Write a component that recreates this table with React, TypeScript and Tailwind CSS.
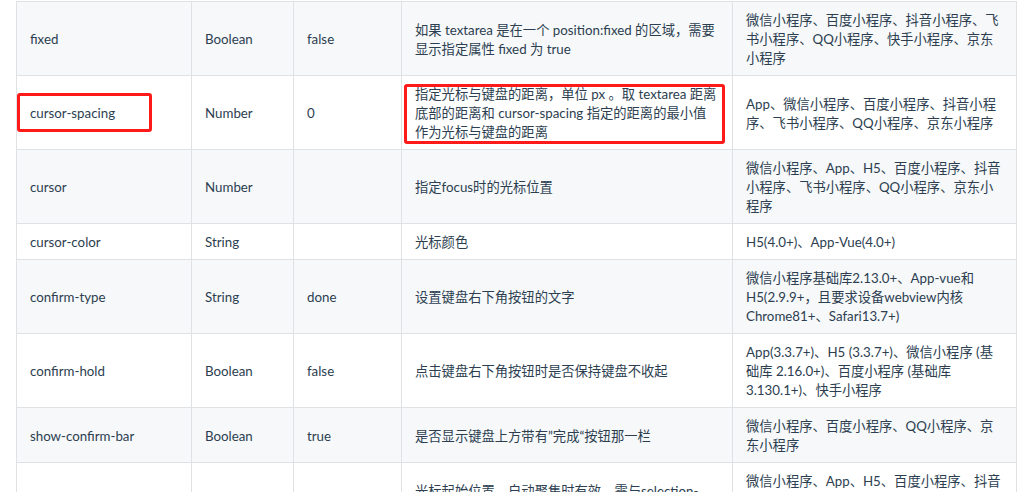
import React from 'react';

type Row = {
  name: string;
  type: string;
  def: string;
  desc: string;
  platform: string;
  markName?: boolean;
  markDesc?: boolean;
};

const rows: Row[] = [
  {
    name: 'fixed',
    type: 'Boolean',
    def: 'false',
    desc: '如果 textarea 是在一个 position:fixed 的区域，需要显示指定属性 fixed 为 true',
    platform: '微信小程序、百度小程序、抖音小程序、飞书小程序、QQ小程序、快手小程序、京东小程序',
  },
  {
    name: 'cursor-spacing',
    type: 'Number',
    def: '0',
    desc: '指定光标与键盘的距离，单位 px 。取 textarea 距离底部的距离和 cursor-spacing 指定的距离的最小值作为光标与键盘的距离',
    platform: 'App、微信小程序、百度小程序、抖音小程序、飞书小程序、QQ小程序、京东小程序',
    markName: true,
    markDesc: true,
  },
  {
    name: 'cursor',
    type: 'Number',
    def: '',
    desc: '指定focus时的光标位置',
    platform: '微信小程序、App、H5、百度小程序、抖音小程序、飞书小程序、QQ小程序、京东小程序',
  },
  {
    name: 'cursor-color',
    type: 'String',
    def: '',
    desc: '光标颜色',
    platform: 'H5(4.0+)、App-Vue(4.0+)',
  },
  {
    name: 'confirm-type',
    type: 'String',
    def: 'done',
    desc: '设置键盘右下角按钮的文字',
    platform: '微信小程序基础库2.13.0+、App-vue和H5(2.9.9+，且要求设备webview内核Chrome81+、Safari13.7+)',
  },
  {
    name: 'confirm-hold',
    type: 'Boolean',
    def: 'false',
    desc: '点击键盘右下角按钮时是否保持键盘不收起',
    platform: 'App(3.3.7+)、H5 (3.3.7+)、微信小程序 (基础库 2.16.0+)、百度小程序 (基础库 3.130.1+)、快手小程序',
  },
  {
    name: 'show-confirm-bar',
    type: 'Boolean',
    def: 'true',
    desc: '是否显示键盘上方带有”完成“按钮那一栏',
    platform: '微信小程序、百度小程序、QQ小程序、京东小程序',
  },
  {
    name: 'selection-start',
    type: 'Number',
    def: '-1',
    desc: '光标起始位置，自动聚集时有效，需与selection-end搭配使用',
    platform: '微信小程序、App、H5、百度小程序、抖音小程序、飞书小程序、QQ小程序、京东小程序',
  },
];

const cell = 'relative border border-[#dfe2e5] px-[13px] pt-[9px] pb-[7px] align-middle text-left';

export default function App() {
  return (
    <div
      className="w-[1029px] h-[492px] overflow-hidden bg-white pt-[1px] pl-[16px] text-[13.3px] leading-[19px] text-[#2c3e50]"
      style={{ fontFamily: 'Lato, "Noto Sans CJK SC", sans-serif' }}
    >
      <table className="table-fixed border-collapse w-[1000px]">
        <colgroup>
          <col className="w-[175px]" />
          <col className="w-[102px]" />
          <col className="w-[108px]" />
          <col className="w-[331px]" />
          <col className="w-[284px]" />
        </colgroup>
        <tbody>
          {rows.map((r, i) => (
            <tr key={r.name} className={i % 2 === 0 ? 'bg-[#f6f8fa]' : 'bg-white'}>
              <td className={cell}>
                {r.markName && (
                  <span className="absolute left-0 top-[17px] w-[135px] h-[39px] rounded-[3px] border-[3px] border-[#ff1a1a]" />
                )}
                {r.name}
              </td>
              <td className={cell}>{r.type}</td>
              <td className={cell}>{r.def}</td>
              <td className={cell}>
                {r.markDesc && (
                  <span className="absolute left-[2px] top-[8px] w-[321px] h-[60px] rounded-[3px] border-[3px] border-[#ff1a1a]" />
                )}
                {r.desc}
              </td>
              <td className={cell}>{r.platform}</td>
            </tr>
          ))}
        </tbody>
      </table>
    </div>
  );
}
